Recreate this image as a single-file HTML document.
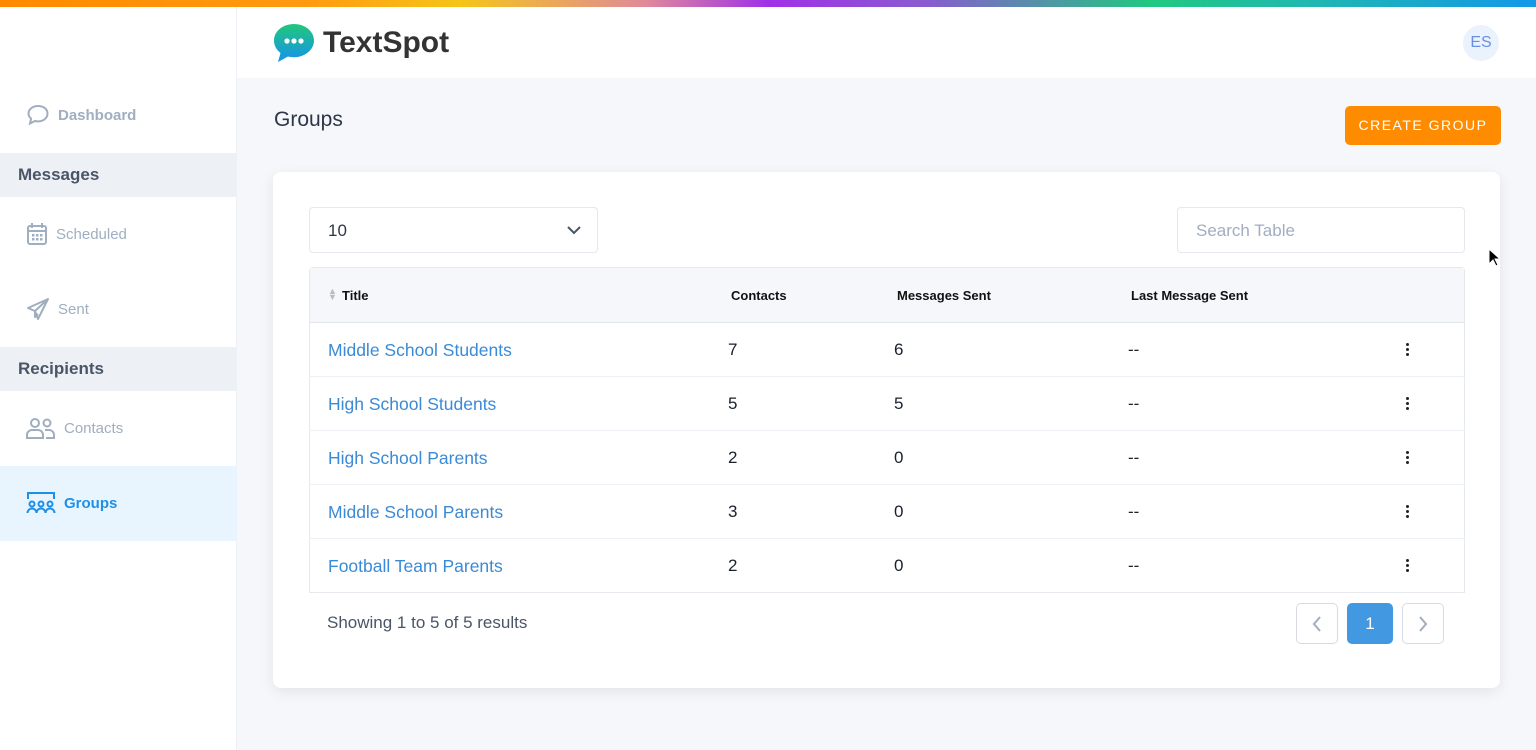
<!DOCTYPE html>
<html><head><meta charset="utf-8"><style>
*{box-sizing:border-box;margin:0;padding:0}
body{width:1536px;height:750px;overflow:hidden;font-family:"Liberation Sans",sans-serif;background:#f5f7fa;position:relative;color:#2d3748}
.top{position:absolute;left:0;top:0;width:1536px;height:7px;background:linear-gradient(90deg,#ff8a00 0%,#ff9a10 20%,#f5c518 30%,#e08a9a 42%,#a030e8 50%,#8a5ad0 60%,#20c980 75%,#20b8b0 85%,#1398e8 100%)}
.side{position:absolute;left:0;top:7px;width:237px;height:743px;background:#fff;border-right:1px solid #edf0f4}
.hdr{position:absolute;left:237px;top:7px;width:1299px;height:71px;background:#fff}
.abs{position:absolute}
.nav{position:absolute;left:0;width:237px;display:flex;align-items:center;padding-left:26px;font-size:15px;color:#a0aec0}
.nav svg{margin-right:8px}
.sec{position:absolute;left:0;width:237px;height:44px;background:#edf1f6;font-size:17px;font-weight:bold;color:#4a5568;padding-left:18px;line-height:44px}
.card{position:absolute;left:273px;top:172px;width:1227px;height:516px;background:#fff;border-radius:8px;box-shadow:0 4px 14px rgba(0,0,0,.08)}
.row{position:absolute;left:309px;width:1156px;height:54px;border-bottom:1px solid #edf0f4;font-size:17px;color:#1a202c}
.row span{position:absolute;top:17px}
.row .t{left:19px;color:#3b8ad6;font-size:17.5px}
.dots{position:absolute;left:1097px;top:20px;width:4px}
.dots i{display:block;width:3px;height:3px;background:#222;border-radius:50%;margin-bottom:2px}
.pg{position:absolute;top:603px;width:42px;height:41px;border:1px solid #d8dbe0;border-radius:5px;background:#fff}
</style></head><body>
<div class="top"></div>
<div class="side">
</div>
<div class="nav" style="top:103px;height:24px;color:#a0aec0;font-weight:bold"><svg width="24" height="22" viewBox="0 0 24 22" fill="none" stroke="#a0aec0" stroke-width="2"><path d="M12 2C6.5 2 2.5 5.5 2.5 9.5c0 2 1 3.8 2.6 5.1L4 19.5l5-2.5c1 .3 2 .4 3 .4 5.5 0 9.5-3.4 9.5-7.9S17.5 2 12 2z"/></svg>Dashboard</div>
<div class="sec" style="top:153px">Messages</div>
<div class="nav" style="top:222px;height:24px"><svg width="22" height="24" viewBox="0 0 22 24" fill="none" stroke="#a0aec0" stroke-width="2"><rect x="2" y="4" width="18" height="18" rx="2"/><path d="M6 1v5M16 1v5M2 9h18"/><g fill="#a0aec0" stroke="none"><rect x="6" y="12" width="2.5" height="2.5"/><rect x="10" y="12" width="2.5" height="2.5"/><rect x="14" y="12" width="2.5" height="2.5"/><rect x="6" y="16" width="2.5" height="2.5"/><rect x="10" y="16" width="2.5" height="2.5"/><rect x="14" y="16" width="2.5" height="2.5"/></g></svg>Scheduled</div>
<div class="nav" style="top:297px;height:24px"><svg width="24" height="24" viewBox="0 0 24 24" fill="none" stroke="#a0aec0" stroke-width="2" stroke-linejoin="round"><path d="M22 2L2 11l7 3 3 8 10-20zM9 14l13-12M9 14v6l3-3"/></svg>Sent</div>
<div class="sec" style="top:347px">Recipients</div>
<div class="nav" style="top:415px;height:26px"><svg width="30" height="24" viewBox="0 0 30 24" fill="none" stroke="#a0aec0" stroke-width="2"><circle cx="9" cy="7" r="4"/><circle cx="21" cy="7" r="3.5"/><path d="M1 22v-3a5 5 0 015-5h6a5 5 0 015 5v3zM19 14h4a5 5 0 015 5v3h-8"/></svg>Contacts</div>
<div class="abs" style="left:0;top:466px;width:237px;height:75px;background:#e8f5fe"></div>
<div class="nav" style="top:490px;height:26px;color:#1e90e8;font-weight:bold"><svg width="30" height="24" viewBox="0 0 30 24" fill="none" stroke="#1e90e8" stroke-width="2"><path d="M2 8V2h26v6"/><circle cx="6" cy="13" r="2.5"/><circle cx="15" cy="13" r="2.5"/><circle cx="24" cy="13" r="2.5"/><path d="M1.5 22a4.5 4.5 0 019 0M10.5 22a4.5 4.5 0 019 0M19.5 22a4.5 4.5 0 019 0"/></svg>Groups</div>
<div class="hdr"></div>
<svg class="abs" style="left:273px;top:22px" width="42" height="42" viewBox="0 0 42 42"><defs><linearGradient id="g" x1="0" y1="0" x2="0" y2="1"><stop offset="0" stop-color="#22c77a"/><stop offset="1" stop-color="#1592f0"/></linearGradient></defs><path d="M21 2C10 2 1 9 1 18.5c0 5 2.5 9.5 6.5 12.5L5 40l10-5.5c2 .5 4 .7 6 .7 11 0 20-7.5 20-16.7S32 2 21 2z" fill="url(#g)"/><circle cx="14" cy="19" r="2.6" fill="#fff"/><circle cx="21" cy="19" r="2.6" fill="#fff"/><circle cx="28" cy="19" r="2.6" fill="#fff"/></svg>
<div class="abs" style="left:323px;top:26px;font-size:30px;font-weight:bold;color:#333">TextSpot</div>
<div class="abs" style="left:1463px;top:25px;width:36px;height:36px;border-radius:50%;background:#eaf2fe;color:#6a8fe0;font-size:16px;text-align:center;line-height:36px">ES</div>
<div class="abs" style="left:274px;top:108px;font-size:21px;color:#2d3748">Groups</div>
<div class="abs" style="left:1345px;top:106px;width:156px;height:39px;background:#ff8c00;border-radius:5px;color:#fff;font-size:14px;letter-spacing:1.5px;text-align:center;line-height:39px">CREATE GROUP</div>
<div class="card"></div>
<div class="abs" style="left:309px;top:207px;width:289px;height:46px;border:1px solid #e5e8ec;border-radius:4px;font-size:17px;color:#2d3748;padding:13px 18px">10<svg class="abs" style="right:16px;top:18px" width="14" height="9" viewBox="0 0 14 9" fill="none" stroke="#4a5568" stroke-width="2"><path d="M1 1l6 6 6-6"/></svg></div>
<div class="abs" style="left:1177px;top:207px;width:288px;height:46px;border:1px solid #e5e8ec;border-radius:4px;font-size:17px;color:#a0aec0;padding:13px 18px">Search Table</div>
<div class="abs" style="left:309px;top:267px;width:1156px;height:326px;border:1px solid #e5e8ec;border-bottom:none;border-radius:4px 4px 0 0"></div>
<div class="abs" style="left:310px;top:268px;width:1154px;height:55px;background:#f5f7fa;border-bottom:1px solid #e2e6eb;font-size:13px;font-weight:bold;color:#111">
<span class="abs" style="left:18px;top:20px;color:#bbb;font-size:9px;line-height:6px">▲<br>▼</span>
<span class="abs" style="left:32px;top:20px">Title</span><span class="abs" style="left:421px;top:20px">Contacts</span><span class="abs" style="left:587px;top:20px">Messages Sent</span><span class="abs" style="left:821px;top:20px">Last Message Sent</span></div>
<div class="row" style="top:323px"><span class="t">Middle School Students</span><span style="left:419px">7</span><span style="left:585px">6</span><span style="left:819px">--</span><div class="dots"><i></i><i></i><i></i></div></div>
<div class="row" style="top:377px"><span class="t">High School Students</span><span style="left:419px">5</span><span style="left:585px">5</span><span style="left:819px">--</span><div class="dots"><i></i><i></i><i></i></div></div>
<div class="row" style="top:431px"><span class="t">High School Parents</span><span style="left:419px">2</span><span style="left:585px">0</span><span style="left:819px">--</span><div class="dots"><i></i><i></i><i></i></div></div>
<div class="row" style="top:485px"><span class="t">Middle School Parents</span><span style="left:419px">3</span><span style="left:585px">0</span><span style="left:819px">--</span><div class="dots"><i></i><i></i><i></i></div></div>
<div class="row" style="top:539px;border-bottom:1px solid #e5e8ec"><span class="t">Football Team Parents</span><span style="left:419px">2</span><span style="left:585px">0</span><span style="left:819px">--</span><div class="dots"><i></i><i></i><i></i></div></div>
<div class="abs" style="left:327px;top:613px;font-size:17px;color:#4a5568">Showing 1 to 5 of 5 results</div>
<div class="pg" style="left:1296px"><svg class="abs" style="left:14px;top:12px" width="12" height="16" viewBox="0 0 12 16" fill="none" stroke="#a0aec0" stroke-width="2"><path d="M9 1L3 8l6 7"/></svg></div>
<div class="pg" style="left:1347px;width:46px;background:#4299e1;border-color:#4299e1;color:#fff;font-size:17px;text-align:center;line-height:39px">1</div>
<div class="pg" style="left:1402px"><svg class="abs" style="left:14px;top:12px" width="12" height="16" viewBox="0 0 12 16" fill="none" stroke="#a0aec0" stroke-width="2"><path d="M3 1l6 7-6 7"/></svg></div>
<svg class="abs" style="left:1488px;top:248px" width="12" height="20" viewBox="0 0 12 20"><path d="M1 1v15l4-4 3 6 2-1-3-6h5z" fill="#000" stroke="#fff" stroke-width="1"/></svg>
</body></html>
